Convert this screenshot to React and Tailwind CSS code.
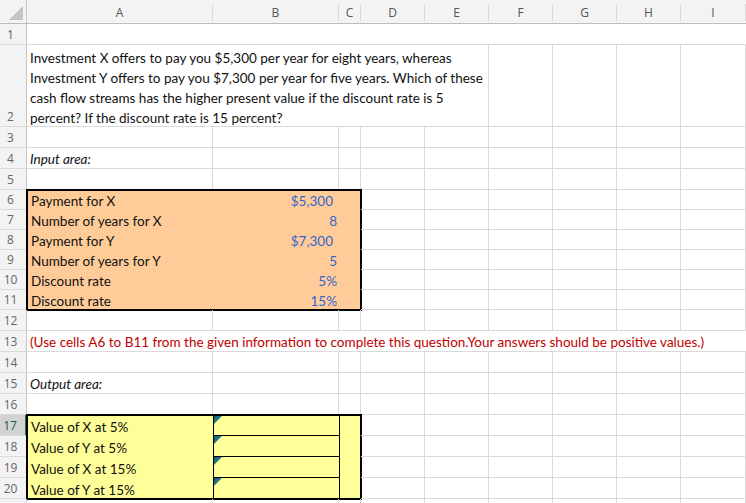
import React from 'react'

// column widths (header + A..I), px
const rest = [
  { k: 'D', w: 'w-[64px]' },
  { k: 'E', w: 'w-[64px]' },
  { k: 'F', w: 'w-[64px]' },
  { k: 'G', w: 'w-[64px]' },
  { k: 'H', w: 'w-[64px]' },
  { k: 'I', w: 'w-[65px]' },
]
const cols = [
  { k: 'A', w: 'w-[186px]' },
  { k: 'B', w: 'w-[126px]' },
  { k: 'C', w: 'w-[22px]' },
  ...rest,
]

const grid = 'border-[#dadada]'
const cellFont = { fontFamily: 'Lato, "Liberation Sans", sans-serif' }
const headFont = { fontFamily: '"Open Sans", "Noto Sans", sans-serif' }

const RowHead = ({ n, h, sel }) => (
  <div
    className={`${h} w-[27px] shrink-0 border-b ${grid} flex items-end justify-center pr-[5px] text-[12px] leading-[19px] ${
      sel ? 'bg-[#d2d2d2] text-[#1d5c38] border-r-2 border-r-[#217346]' : 'bg-[#f3f3f3] text-[#666] border-r border-r-[#c6c6c6]'
    }`}
    style={headFont}
  >
    {n}
  </div>
)

const Cell = ({ w, h, children, className = '' }) => (
  <div className={`${w} ${h} shrink-0 border-r border-b ${grid} ${className}`}>{children}</div>
)

const GridRow = ({ n, h = 'h-[21px]', a, italic }) => (
  <div className="flex">
    <RowHead n={n} h={h} />
    {cols.map((c, i) => (
      <Cell key={c.k} w={c.w} h={h} className="flex items-end pl-[3px] whitespace-nowrap">
        {i === 0 && a ? <span className={`leading-[17px] text-[13.5px] text-[#111] ${italic ? 'italic' : ''}`}>{a}</span> : null}
      </Cell>
    ))}
  </div>
)

const RestCells = ({ h }) => (
  <div className="flex">
    {rest.map((c) => (
      <Cell key={c.k} w={c.w} h={h} />
    ))}
  </div>
)

const inputs = [
  ['Payment for X', '$5,300', true],
  ['Number of years for X', '8', false],
  ['Payment for Y', '$7,300', true],
  ['Number of years for Y', '5', false],
  ['Discount rate', '5%', false],
  ['Discount rate', '15%', false],
]

const outputs = ['Value of X at 5%', 'Value of Y at 5%', 'Value of X at 15%', 'Value of Y at 15%']

// thick 2px border drawn over the gridline, like excel does
const thick = 'shadow-[0_0_0_1px_#000,inset_0_0_0_1px_#000]'

const Corner = () => (
  <svg width="14" height="14" viewBox="0 0 14 14" className="absolute right-[3px] bottom-[3px]">
    <polygon points="14,0 14,14 0,14" fill="#c4c4c4" />
  </svg>
)

const Flag = () => (
  <svg width="8" height="8" viewBox="0 0 8 8" className="absolute left-0 top-0">
    <defs>
      <linearGradient id="fl" x1="0" y1="0" x2="1" y2="1">
        <stop offset="0" stopColor="#14566e" />
        <stop offset="1" stopColor="#3a9fb4" />
      </linearGradient>
    </defs>
    <polygon points="0,0 8,0 0,8" fill="url(#fl)" />
  </svg>
)

export default function App() {
  return (
    <div className="w-[746px] h-[503px] overflow-hidden bg-white text-[#111]" style={cellFont}>
      {/* column headers */}
      <div className="flex h-[24px] bg-[#f3f3f3] border-b border-[#bdbdbd]" style={headFont}>
        <div className="relative w-[27px] shrink-0 border-r border-[#c6c6c6]">
          <Corner />
        </div>
        {cols.map((c) => (
          <div key={c.k} className={`${c.w} shrink-0 flex items-end justify-center pb-[2px] text-[12px] text-[#555]`}>
            <div className="w-full text-center border-r border-[#dadada] leading-[17px]">{c.k}</div>
          </div>
        ))}
      </div>

      {/* row 1 */}
      <div className="flex">
        <RowHead n="1" h="h-[21px]" />
        <div className={`flex-1 h-[21px] border-b ${grid}`} />
      </div>

      {/* row 2: merged A..E */}
      <div className="flex">
        <RowHead n="2" h="h-[82px]" />
        <div className={`w-[462px] h-[82px] shrink-0 border-r border-b ${grid} flex flex-col justify-end pl-[3px] text-[13.5px] leading-[20px] whitespace-nowrap`}>
          <div className="translate-y-[2px]">
            <div>Investment X offers to pay you $5,300 per year for eight years, whereas</div>
            <div>Investment Y offers to pay you $7,300 per year for five years. Which of these</div>
            <div>cash flow streams has the higher present value if the discount rate is 5</div>
            <div>percent? If the discount rate is 15 percent?</div>
          </div>
        </div>
        {rest.slice(2).map((c) => (
          <Cell key={c.k} w={c.w} h="h-[82px]" />
        ))}
      </div>

      <GridRow n="3" />
      <GridRow n="4" a="Input area:" italic />
      <GridRow n="5" />

      {/* rows 6-11: input box */}
      <div className="flex">
        <div className="flex flex-col">
          {inputs.map((r, i) => (
            <RowHead key={i} n={String(6 + i)} h="h-[20px]" />
          ))}
        </div>
        <div className={`w-[334px] shrink-0 bg-[#ffcc99] ${thick} flex flex-col`}>
          {inputs.map(([label, val, acct], i) => (
            <div key={i} className="flex h-[20px] items-end text-[13.5px] leading-[17px]">
              <div className="w-[186px] shrink-0 pl-[4px] whitespace-nowrap">{label}</div>
              <div className={`w-[124px] shrink-0 text-right text-[#3366cc] ${acct ? 'pr-[4px]' : ''}`}>{val}</div>
            </div>
          ))}
        </div>
        <div className="flex flex-col">
          {inputs.map((r, i) => (
            <RestCells key={i} h="h-[20px]" />
          ))}
        </div>
      </div>

      <GridRow n="12" />

      {/* row 13 */}
      <div className="flex">
        <RowHead n="13" h="h-[21px]" />
        <div className={`flex-1 h-[21px] border-b ${grid} flex items-end pl-[3px] text-[13.5px] leading-[17px] text-[#c00000] whitespace-nowrap`}>
          (Use cells A6 to B11 from the given information to complete this question.Your answers should be positive values.)
        </div>
      </div>

      <GridRow n="14" />
      <GridRow n="15" a="Output area:" italic />
      <GridRow n="16" />

      {/* rows 17-20: output box */}
      <div className="flex">
        <div className="flex flex-col">
          {outputs.map((r, i) => (
            <RowHead key={i} n={String(17 + i)} h="h-[21px]" sel={i === 0} />
          ))}
        </div>
        <div className={`w-[334px] shrink-0 bg-[#ffff99] ${thick} flex flex-col`}>
          {outputs.map((label, i) => (
            <div key={i} className="flex h-[21px] text-[13.5px] leading-[17px]">
              <div className="w-[186px] shrink-0 pl-[4px] flex items-end whitespace-nowrap">{label}</div>
              <div className={`relative w-[127px] shrink-0 border-x border-black ${i < 3 ? 'border-b' : ''} ${i === 0 ? 'mt-[1px]' : ''}`}>
                <Flag />
              </div>
            </div>
          ))}
        </div>
        <div className="flex flex-col">
          {outputs.map((r, i) => (
            <RestCells key={i} h="h-[21px]" />
          ))}
        </div>
      </div>

      <GridRow n="" />
    </div>
  )
}
